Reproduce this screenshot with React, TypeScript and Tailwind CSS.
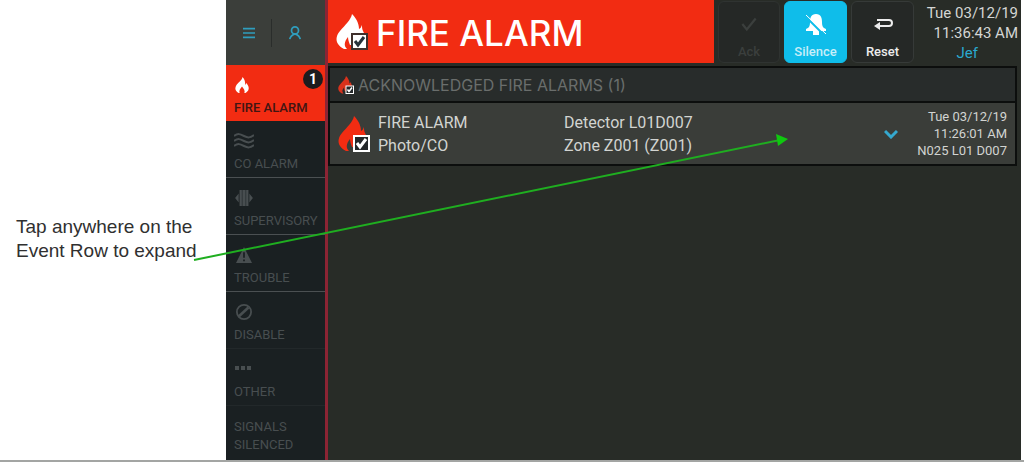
import React, { useState } from "react";

// Flame glyph used in the sidebar
const Flame: React.FC<{ className?: string }> = ({ className }) => (
  <svg viewBox="0 0 30 34" className={className} fill="currentColor" aria-hidden="true">
    <path d="M16 0C15 7 8 11 4 16C-1 23 0 30 8 34H10C8 29 11 25 15 20C19 25 22 29 20 34H22C30 30 31 23 27 17C26 15 25 14 24 13C24 15 23 16 22 17C22 9 20 4 16 0Z" />
  </svg>
);

// Flame with the "acknowledged" tick in its lower right corner
const AckFlame: React.FC<{ className?: string; light?: boolean }> = ({
  className,
  light,
}) => (
  <svg viewBox="0 0 32 36" className={className} aria-hidden="true">
    <path
      fill="currentColor"
      d="M16 0C15 6 9 11 4 17C-2 24 0 31 8 35H11C7 31 9 27 12 23C12 26 13 28 14 31H27C29 27 30 22 27 17C26 15 26 13 26 11C25 13 25 14 23 15C23 9 20 4 16 0Z"
    />
    <rect
      x="16"
      y="20"
      width="15"
      height="15"
      fill={light ? "#fff" : "#24282a"}
      stroke={light ? "#40302c" : "#fff"}
      strokeWidth="2"
    />
    <path
      d="M19 27l3 4 6-8"
      fill="none"
      stroke={light ? "#26323a" : "#fff"}
      strokeWidth="3"
    />
  </svg>
);

const WavesIcon = () => (
  <svg viewBox="0 0 20 16" className="h-4 w-5" fill="none" stroke="currentColor" strokeWidth="2">
    <path d="M0 3C4 0 6 1 10 3S16 5 20 2M0 8C4 5 6 6 10 8S16 10 20 7M0 13C4 10 6 11 10 13S16 15 20 12" />
  </svg>
);

const SupervisoryIcon = () => (
  <svg viewBox="0 0 20 18" className="h-4 w-5" fill="currentColor">
    <path d="M5 0H15V18H5ZM4 4V14L0 9ZM16 4V14L20 9Z" />
    <path d="M8 0V18M12 0V18" stroke="#2c3335" />
  </svg>
);

const TroubleIcon = () => (
  <svg viewBox="0 0 20 18" className="h-4 w-5" fill="currentColor">
    <path fillRule="evenodd" d="M10 0L19 18H1ZM9 6V12H11V6ZM9 14V16H11V14Z" />
  </svg>
);

const DisableIcon = () => (
  <svg viewBox="0 0 20 18" className="h-4 w-5" fill="none" stroke="currentColor" strokeWidth="2">
    <circle cx="10" cy="9" r="8" />
    <path d="M4 14L15 4" strokeWidth="3" />
  </svg>
);

const DotsIcon = () => (
  <svg viewBox="0 0 20 16" className="h-4 w-5" fill="currentColor">
    <path d="M1 5H5V9H1ZM7 5H11V9H7ZM13 5H17V9H13Z" />
  </svg>
);

const categories = [
  { label: "CO ALARM", icon: <WavesIcon />, border: "border-[#4b5052]" },
  { label: "SUPERVISORY", icon: <SupervisoryIcon />, border: "border-[#4b5052]" },
  { label: "TROUBLE", icon: <TroubleIcon />, border: "border-[#4b5052]" },
  { label: "DISABLE", icon: <DisableIcon />, border: "border-[#22282a]" },
  { label: "OTHER", icon: <DotsIcon />, border: "border-[#22282a]" },
];

const Sidebar = () => (
  <aside className="flex w-[102px] shrink-0 flex-col border-r-3 border-[#8c2434] bg-[#1a2022]">
    {/* Menu and user buttons */}
    <div className="flex h-[65px] items-center bg-[#3b3e3a] text-[#2f9dbd]">
      <button aria-label="Menu" className="flex h-7 flex-1 items-center justify-center border-r border-[#2a2d2b]">
        <svg viewBox="0 0 16 14" className="h-3 w-4" stroke="currentColor" strokeWidth="2">
          <path d="M1 2H15M1 7H15M1 12H15" />
        </svg>
      </button>
      <button aria-label="User" className="flex h-7 flex-1 items-center justify-center pr-2">
        <svg viewBox="0 0 16 16" className="size-[14px]" fill="none" stroke="currentColor" strokeWidth="2">
          <circle cx="8" cy="5" r="4" />
          <path d="M2 15C3 11 5 10 8 9C11 10 13 11 14 15" />
        </svg>
      </button>
    </div>

    <nav className="flex flex-col text-sm leading-[18px] text-[#484e50]">
      <button className="relative flex h-14 flex-col justify-between bg-[#f22c12] px-2 pt-3 text-left text-[#421512]">
        <Flame className="h-4 w-4 text-white" />
        <span className="pb-1 text-[13px] font-medium whitespace-nowrap">FIRE ALARM</span>
        <span className="absolute top-1 right-0.5 flex size-5 items-center justify-center rounded-full bg-[#1c1c1e] font-bold text-white">
          1
        </span>
      </button>
      {categories.map((category) => (
        <button
          key={category.label}
          className={`flex h-[57px] flex-col justify-between border-b px-2 pt-3 text-left ${category.border}`}
        >
          {category.icon}
          <span className="pb-1 text-[13px] whitespace-nowrap">{category.label}</span>
        </button>
      ))}
      <button className="px-2 pt-3 text-left text-[13px]">
        SIGNALS
        <br />
        SILENCED
      </button>
    </nav>
  </aside>
);

const TopBar = () => (
  <header className="flex h-[66px] items-start justify-between">
    <div className="flex h-[63px] flex-1 items-center gap-2 bg-[#f22c12] pl-2">
      <AckFlame className="h-9 w-8 text-white" light />
      <h1 className="pt-1 font-[Inter,sans-serif] text-[35px] font-medium whitespace-nowrap text-white">
        FIRE ALARM
      </h1>
    </div>
    <div className="flex gap-1 pt-px pl-1 text-[13px] leading-4 font-medium">
      <button
        disabled
        className="flex h-[62px] w-[62px] flex-col items-center justify-between rounded-md border border-[#2f3331] bg-[#252826] pt-3 pb-0.5 text-[#3b3f3d]"
      >
        <svg viewBox="0 0 14 18" className="h-5 w-4" fill="none" stroke="currentColor" strokeWidth="2">
          <path d="M1 9L5 14L13 4" />
        </svg>
        Ack
      </button>
      <button className="flex h-[62px] w-[63px] flex-col items-center justify-between rounded-md border border-[#0fbdea] bg-[#0fbdea] pt-3 pb-0.5 text-[#c8eef8]">
        <svg viewBox="0 0 22 22" className="size-[22px]">
          <path
            fill="#fff"
            d="M11 0C6 0 5 4 5 8C5 12 4 14 1 15V17H21V15C18 14 17 12 17 8C17 4 16 0 11 0ZM8 17H14V21H8Z"
          />
          <path d="M1 3L20 22" stroke="#0fbdea" strokeWidth="2" />
          <path d="M1 1L21 20" stroke="#fff" strokeWidth="1" />
        </svg>
        Silence
      </button>
      <button className="flex h-[62px] w-[63px] flex-col items-center justify-between rounded-md border border-[#363a38] bg-[#252826] pt-3 pb-0.5 text-[#ececec]">
        <svg viewBox="0 0 20 18" className="h-5 w-5" fill="none" stroke="currentColor" strokeWidth="2">
          <path d="M4 5H16C20 5 20 11 16 11H5" />
          <path d="M7 7L1 11L7 15Z" fill="currentColor" stroke="none" />
        </svg>
        Reset
      </button>
    </div>
    <div className="w-[107px] pt-[3px] pr-[3px] text-right text-[15px] leading-5 text-[#d4d6d4]">
      <p className="whitespace-nowrap">Tue 03/12/19</p>
      <p className="whitespace-nowrap">11:36:43 AM</p>
      <p className="pr-10 text-[#2aa9cf]">Jef</p>
    </div>
  </header>
);

const EventList = () => {
  const [expanded, setExpanded] = useState(false);

  return (
    <section className="mr-1 border-2 border-[#0c0e0d]">
      <h2 className="flex h-[35px] items-center gap-1 border-b-2 border-[#0c0e0d] bg-[#282c2b] pl-2 font-[Inter,sans-serif] text-base text-[#6a6e6c]">
        <AckFlame className="h-[18px] w-4 text-[#d8321c]" />
        ACKNOWLEDGED FIRE ALARMS (1)
      </h2>
      <button
        aria-expanded={expanded}
        onClick={() => setExpanded(!expanded)}
        className="flex h-[61px] w-full items-center bg-[#3a3d39] pr-2 pl-2 text-left text-base leading-[23px] text-[#d2d4d1]"
      >
        <AckFlame className="mr-2 h-9 w-8 shrink-0 text-[#f22c12]" />
        <span className="w-[186px] shrink-0">
          FIRE ALARM
          <br />
          Photo/CO
        </span>
        <span className="flex-1">
          Detector L01D007
          <br />
          Zone Z001 (Z001)
        </span>
        <svg viewBox="0 0 14 10" className="h-[10px] w-[14px]" fill="none" stroke="#35a9cf" strokeWidth="3">
          <path d="M1 2L7 8L13 2" />
        </svg>
        <span className="w-[109px] shrink-0 text-right text-[13px] leading-[17px]">
          Tue 03/12/19
          <br />
          11:26:01 AM
          <br />
          N025 L01 D007
        </span>
      </button>
    </section>
  );
};

// Pointer from the caption to the event row
const PointerArrow = () => (
  <svg
    viewBox="0 0 600 130"
    className="pointer-events-none absolute top-[134px] left-[192px] h-[130px] w-[600px]"
    aria-hidden="true"
  >
    <path d="M2 126L588 6" stroke="#1fae20" strokeWidth="2" />
    <path d="M584 0L596 5L586 12Z" fill="#0fc80f" />
  </svg>
);

const App: React.FC = () => {
  return (
    <div className="relative flex min-h-screen border-b-2 border-[#a3a5a3] bg-white pr-[3px] font-[Roboto,sans-serif]">
      <div className="w-[226px] shrink-0 pt-[215px] pl-4">
        <p className="font-['Liberation_Sans',sans-serif] text-[19px] leading-6 whitespace-nowrap text-[#303030]">
          Tap anywhere on the
          <br />
          Event Row to expand
        </p>
      </div>
      <Sidebar />
      <main className="min-w-0 flex-1 bg-[#282c27]">
        <TopBar />
        <EventList />
      </main>
      <PointerArrow />
    </div>
  );
};

export default App;
